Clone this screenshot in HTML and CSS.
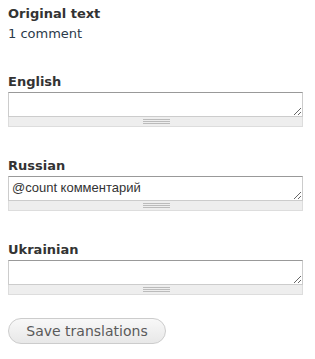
FILE: index.html
```html
<!DOCTYPE html>
<html lang="en">
<head>
    <meta charset="UTF-8">
    <title>Translate</title>
    <link rel="stylesheet" href="styles.css">
</head>
<body>
    <form class="translate-form">
        <div class="form-item original">
            <label>Original text</label>
            <div class="source">1 comment</div>
        </div>

        <div class="form-item">
            <label for="t-en">English</label>
            <div class="resizable">
                <textarea id="t-en"></textarea>
                <div class="grippie"></div>
            </div>
        </div>

        <div class="form-item">
            <label for="t-ru">Russian</label>
            <div class="resizable">
                <textarea id="t-ru">@count комментарий</textarea>
                <div class="grippie"></div>
            </div>
        </div>

        <div class="form-item">
            <label for="t-uk">Ukrainian</label>
            <div class="resizable">
                <textarea id="t-uk"></textarea>
                <div class="grippie"></div>
            </div>
        </div>

        <div class="actions">
            <button type="button" class="button">Save translations</button>
        </div>
    </form>
</body>
</html>
```

FILE: styles.css
```css
* {
    margin: 0;
    padding: 0;
    box-sizing: border-box;
}

body {
    font-family: "DejaVu Sans", Verdana, sans-serif;
    font-size: 13px;
    line-height: 18px;
    color: #333;
    background: #fff;
    padding: 5px 8px;
}

.form-item {
    margin-bottom: 30px;
}

.form-item label {
    display: block;
    font-weight: bold;
    color: #333;
    margin-bottom: 1px;
}

.original label {
    margin-bottom: 2px;
}

.source {
    color: #2b3a4a;
}

.resizable {
    width: 295px;
}

textarea {
    display: block;
    width: 100%;
    height: 25px;
    padding: 2px 3px;
    border: 1px solid #ccc;
    border-top-color: #999;
    font-family: "Liberation Sans", Arial, sans-serif;
    font-size: 13px;
    line-height: 17px;
    color: #333;
    resize: vertical;
    overflow: hidden;
}

.grippie {
    height: 10px;
    background-color: #eee;
    border: 1px solid #ddd;
    border-top: none;
    position: relative;
}

.grippie::after {
    content: "";
    position: absolute;
    left: 50%;
    top: 2px;
    width: 27px;
    margin-left: -13px;
    height: 5px;
    background: repeating-linear-gradient(to bottom, #bbb 0, #bbb 1px, transparent 1px, transparent 2px);
}

.actions {
    margin-top: -7px;
}

.button {
    height: 26px;
    width: 158px;
    border: 1px solid #ccc;
    border-radius: 13px;
    background: linear-gradient(#f8f8f8, #e8e8e8);
    color: #5a5a5a;
    font-family: "DejaVu Sans", Verdana, sans-serif;
    font-size: 14px;
}
```
